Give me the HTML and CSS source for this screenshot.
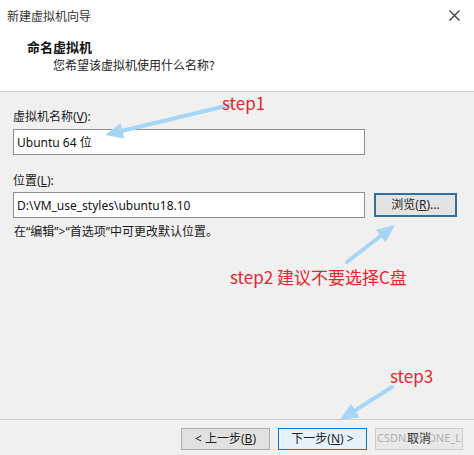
FILE: index.html
```html
<!DOCTYPE html>
<html lang="zh-CN">
<head>
<meta charset="utf-8">
<title>新建虚拟机向导</title>
<link rel="stylesheet" href="styles.css">
</head>
<body>
<div class="window">
  <header class="head">
    <div class="titlebar">
      <span class="title">新建虚拟机向导</span>
      <svg class="close" width="11" height="11" viewBox="0 0 11 11"><path d="M0.5 0.5 L10.5 10.5 M10.5 0.5 L0.5 10.5" stroke="#333" stroke-width="1.1" fill="none"/></svg>
    </div>
    <h1 class="heading">命名虚拟机</h1>
    <p class="sub">您希望该虚拟机使用什么名称?</p>
  </header>
  <main class="body">
    <label class="label">虚拟机名称(<u>V</u>):</label>
    <div class="row">
      <div class="input">Ubuntu 64 位</div>
    </div>
    <label class="label label2">位置(<u>L</u>):</label>
    <div class="row row2">
      <div class="input">D:\VM_use_styles\ubuntu18.10</div>
      <button class="btn browse">浏览(<u>R</u>)...</button>
    </div>
    <p class="hint">在“编辑”&gt;“首选项”中可更改默认位置。</p>
  </main>
  <footer class="foot">
    <button class="btn">&lt; 上一步(<u>B</u>)</button>
    <button class="btn primary">下一步(<u>N</u>) &gt;</button>
    <button class="btn cancel">取消</button>
    <span class="wm">CSDN @DONE_L</span>
  </footer>
</div>
<svg class="arrows" width="474" height="455" viewBox="0 0 474 455">
  <g stroke="#a5d6f6" stroke-width="4" stroke-linecap="round" fill="#a5d6f6">
    <line x1="230" y1="105" x2="122.5" y2="130.8"/>
    <polygon points="105,135 124.4,138.6 120.6,123" stroke="none"/>
    <line x1="347" y1="262" x2="380.7" y2="236"/>
    <polygon points="395,225 385.6,242.3 375.8,229.7" stroke="none"/>
    <line x1="392" y1="387" x2="355.2" y2="410.4"/>
    <polygon points="340,420 359.5,417.2 350.9,403.7" stroke="none"/>
  </g>
</svg>
<span class="note n1">step1</span>
<span class="note n2">step2 建议不要选择C盘</span>
<span class="note n3">step3</span>
</body>
</html>
```
FILE: styles.css
```css
html, body {
  margin: 0;
  padding: 0;
  background: #ffffff;
}
body {
  width: 474px;
  height: 455px;
  position: relative;
  overflow: hidden;
  font-family: "Noto Sans", "Noto Sans CJK SC", sans-serif;
  font-size: 12px;
  color: #1a1a1a;
}
.window {
  width: 474px;
  height: 455px;
  display: flex;
  flex-direction: column;
}
.head {
  background: #ffffff;
  border-bottom: 1px solid #cfcfcf;
  box-sizing: border-box;
  height: 92px;
}
.titlebar {
  display: flex;
  justify-content: space-between;
  align-items: center;
  padding: 7px 14px 0 7px;
  height: 16px;
  font-family: "Noto Sans CJK SC", sans-serif;
  font-size: 12px;
  color: #333;
}
.close {
  margin-top: 1px;
}
.heading {
  margin: 15px 0 0 27px;
  font-family: "Noto Sans CJK SC", sans-serif;
  font-size: 13px;
  line-height: 17px;
  font-weight: 700;
  color: #111;
}
.sub {
  margin: 2px 0 0 53px;
  font-family: "Noto Sans CJK SC", sans-serif;
  font-size: 12px;
  line-height: 16px;
  color: #222;
}
.body {
  flex: 1;
  background: #f0f0f0;
  border-bottom: 1px solid #d0d0d0;
  padding: 0 0 0 13px;
  display: flex;
  flex-direction: column;
  align-items: flex-start;
}
.label {
  display: block;
  margin-top: 17px;
  font-family: "Noto Sans", "Noto Sans CJK SC", sans-serif;
  font-size: 12px;
  line-height: 16px;
  color: #1a1a1a;
}
.label2 {
  margin-top: 18px;
}
.row {
  margin-top: 4px;
  display: flex;
  align-items: center;
  gap: 9px;
}
.row2 {
  margin-top: 3px;
}
.input {
  width: 352px;
  height: 26px;
  box-sizing: border-box;
  border: 1px solid #8e8e8e;
  background: #ffffff;
  padding: 0 3px;
  display: flex;
  align-items: center;
  font-family: "Noto Sans", "Noto Sans CJK SC", sans-serif;
  font-size: 12px;
  color: #111;
}
.btn {
  font-family: "Noto Sans", "Noto Sans CJK SC", sans-serif;
  font-size: 12px;
  color: #222;
  background: #e1e1e1;
  border: 1px solid #adadad;
  width: 89px;
  height: 22px;
  padding: 0;
  line-height: 18px;
  box-sizing: border-box;
}
.browse {
  width: 83px;
  height: 24px;
  border: 2px solid #2f6fa6;
  background: #e3e3e3;
}
.hint {
  margin: 6px 0 0 1px;
  font-family: "Noto Sans", "Noto Sans CJK SC", sans-serif;
  font-size: 12px;
  line-height: 16px;
  color: #1a1a1a;
}
.foot {
  position: relative;
  height: 35px;
  background: #f0f0f0;
  display: flex;
  justify-content: flex-end;
  align-items: flex-start;
  gap: 8px;
  padding: 8px 11px 0 0;
  box-sizing: border-box;
}
.primary {
  background: #e5f1fb;
  border-color: #0078d7;
}
.cancel {
  width: 88px;
  background: #e9e9e9;
  border-color: #cccccc;
  color: #222;
}
.wm {
  position: absolute;
  right: 12px;
  top: 10px;
  width: 86px;
  font-family: "Noto Sans", sans-serif;
  font-size: 11px;
  line-height: 16px;
  color: rgba(160, 160, 160, 0.8);
  text-align: center;
  pointer-events: none;
}
.arrows {
  position: absolute;
  left: 0;
  top: 0;
  pointer-events: none;
}
.note {
  position: absolute;
  font-family: "Noto Sans CJK SC", sans-serif;
  font-size: 17px;
  line-height: 22px;
  color: #e8252c;
}
.n1 { left: 222px; top: 92px; }
.n2 { left: 230px; top: 266px; }
.n3 { left: 390px; top: 365px; }
```
